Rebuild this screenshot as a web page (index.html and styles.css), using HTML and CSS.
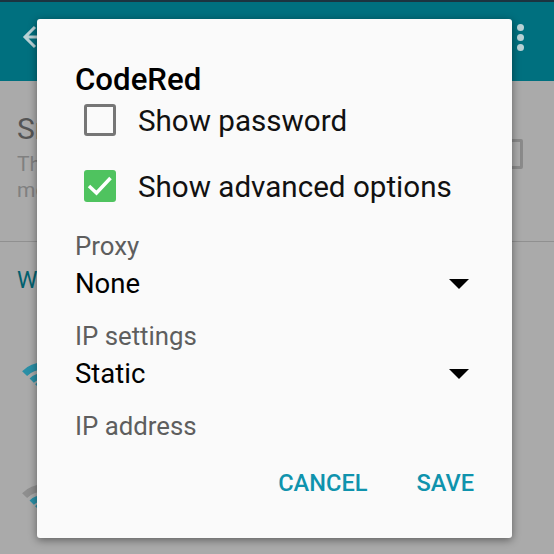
FILE: index.html
```html
<!DOCTYPE html>
<html lang="en">

<head>
    <meta charset="UTF-8">
    <meta name="viewport" content="width=device-width, initial-scale=1.0">
    <title>CodeRed</title>
    <link rel="stylesheet" href="styles.css">
</head>

<body>
    <div class="statusbar"></div>
    <div class="appbar">
        <svg class="back" width="30" height="30" viewBox="0 0 30 30">
            <path d="M27 15H6M15 5L5 15L15 25" fill="none" stroke="#b9d2d6" stroke-width="3"/>
        </svg>
        <div class="dots"><span></span><span></span><span></span></div>
    </div>
    <div class="smart">
        <div class="smart-text">
            <p class="smart-title">Smart</p>
            <p class="smart-desc">The<br>mo</p>
        </div>
        <div class="smart-box"></div>
    </div>
    <p class="section">Wi-Fi</p>
    <div class="networks">
        <svg class="wifi" width="40" height="34" viewBox="0 0 40 34">
            <g fill="none" stroke="#2a8fa6">
                <path d="M6.6 13.6A26 26 0 0 1 43.4 13.6" stroke-width="7"/>
                <path d="M13.7 20.7A16 16 0 0 1 36.3 20.7" stroke-width="6"/>
                <path d="M19 26A8 8 0 0 1 31 26" stroke-width="5"/>
            </g>
        </svg>
        <svg class="wifi" width="40" height="34" viewBox="0 0 40 34">
            <g fill="none" stroke="#2a8fa6">
                <path d="M6.6 13.6A26 26 0 0 1 43.4 13.6" stroke="#8e8e8e" stroke-width="7"/>
                <path d="M13.7 20.7A16 16 0 0 1 36.3 20.7" stroke-width="6"/>
                <path d="M19 26A8 8 0 0 1 31 26" stroke-width="5"/>
            </g>
        </svg>
    </div>

    <div class="dialog">
        <h1 class="dialog-title">CodeRed</h1>
        <div class="check-row">
            <span class="box"></span>
            <span class="check-text">Show password</span>
        </div>
        <div class="check-row second">
            <span class="box checked">
                <svg width="32" height="32" viewBox="0 0 32 32">
                    <path d="M5 16L12.5 23L26.5 8" fill="none" stroke="#fff" stroke-width="3.5"/>
                </svg>
            </span>
            <span class="check-text">Show advanced options</span>
        </div>
        <p class="label proxy">Proxy</p>
        <div class="select"><span>None</span><i class="arrow"></i></div>
        <p class="label">IP settings</p>
        <div class="select"><span>Static</span><i class="arrow"></i></div>
        <p class="label">IP address</p>
        <div class="actions">
            <span>CANCEL</span>
            <span>SAVE</span>
        </div>
    </div>
</body>

</html>
```

FILE: styles.css
```css
html, body {
    margin: 0;
    height: 100%;
}

body {
    position: relative;
    width: 554px;
    height: 554px;
    overflow: hidden;
    background-color: #aaaaaa;
    font-family: Roboto, "Liberation Sans", sans-serif;
}

p, h1 {
    margin: 0;
}

.statusbar {
    height: 2px;
    background-color: #1c3440;
}

.appbar {
    display: flex;
    justify-content: space-between;
    align-items: center;
    height: 79px;
    padding: 0 30px 9px 20px;
    box-sizing: border-box;
    background-color: #00707f;
}

.dots {
    display: flex;
    flex-direction: column;
    gap: 3px;
}

.dots span {
    width: 7px;
    height: 7px;
    border-radius: 50%;
    background-color: #b9d2d6;
}

.smart {
    display: flex;
    justify-content: space-between;
    height: 161px;
    padding: 30px 31px 0 17px;
    box-sizing: border-box;
    border-bottom: 1px solid #909090;
}

.smart-title {
    font-size: 30px;
    line-height: 36px;
    color: #555555;
}

.smart-desc {
    margin-top: 4px;
    font-size: 21px;
    line-height: 26px;
    color: #808080;
}

.smart-box {
    width: 30px;
    height: 30px;
    margin-top: 28px;
    box-sizing: border-box;
    border: 3px solid #8a8a8a;
    border-radius: 2px;
}

.section {
    margin: 24px 0 0 17px;
    font-size: 23px;
    line-height: 30px;
    color: #00606e;
}

.networks {
    display: flex;
    flex-direction: column;
    gap: 88px;
    margin: 64px 0 0 18px;
}

.wifi {
    display: block;
}

.dialog {
    position: absolute;
    left: 37px;
    top: 19px;
    width: 475px;
    height: 519px;
    box-sizing: border-box;
    padding: 44px 38px 0;
    background-color: #fafafa;
    border-radius: 3px;
    box-shadow: 0 2px 8px rgba(0, 0, 0, 0.45);
}

.dialog-title {
    margin-bottom: 1px;
    font-size: 31.2px;
    font-weight: 500;
    line-height: 34px;
    color: #000000;
}

.check-row {
    display: flex;
    align-items: center;
    gap: 22px;
    height: 44px;
    margin-left: 9px;
    font-size: 29.6px;
    color: #111111;
}

.check-text {
    padding-top: 2px;
}

.second {
    margin-top: 22px;
}

.box {
    width: 32px;
    height: 32px;
    box-sizing: border-box;
    border: 3.5px solid #767676;
    border-radius: 3px;
}

.checked {
    border: none;
    background-color: #4fc35f;
}

.checked svg {
    display: block;
}

.label {
    font-size: 25.8px;
    line-height: 30px;
    color: #5e5e5e;
}

.proxy {
    margin-top: 23px;
}

.select {
    display: flex;
    justify-content: space-between;
    align-items: center;
    height: 44px;
    margin-bottom: 16px;
    padding-right: 5px;
    font-size: 27.5px;
    color: #000000;
}

.arrow {
    width: 0;
    height: 0;
    margin-top: 2px;
    border-left: 10px solid transparent;
    border-right: 10px solid transparent;
    border-top: 10px solid #000000;
}

.actions {
    display: flex;
    justify-content: flex-end;
    gap: 49px;
    margin-top: 28px;
    font-size: 23.6px;
    font-weight: 500;
    color: #0f93ad;
}
```
